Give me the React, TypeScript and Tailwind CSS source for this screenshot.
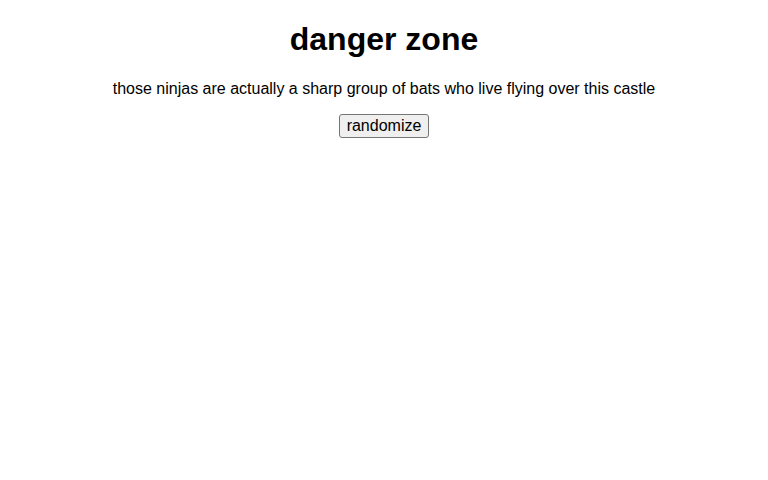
export default function App() {
  return (
    <div className="min-h-screen bg-white text-center text-black font-['Liberation_Sans',Arial,sans-serif]">
      <div className="pt-[21px]">
        <h1 className="text-[32px] leading-[37px] font-bold">danger zone</h1>
        <p className="mt-[22px] text-[16px] leading-[18px]">
          those ninjas are actually a sharp group of bats who live flying over this castle
        </p>
        <button className="mt-[16px] px-[7px] py-[2px] border border-[#767676] rounded-[3px] bg-[#efefef] text-[16px] leading-[18px] text-black">
          randomize
        </button>
      </div>
    </div>
  );
}
